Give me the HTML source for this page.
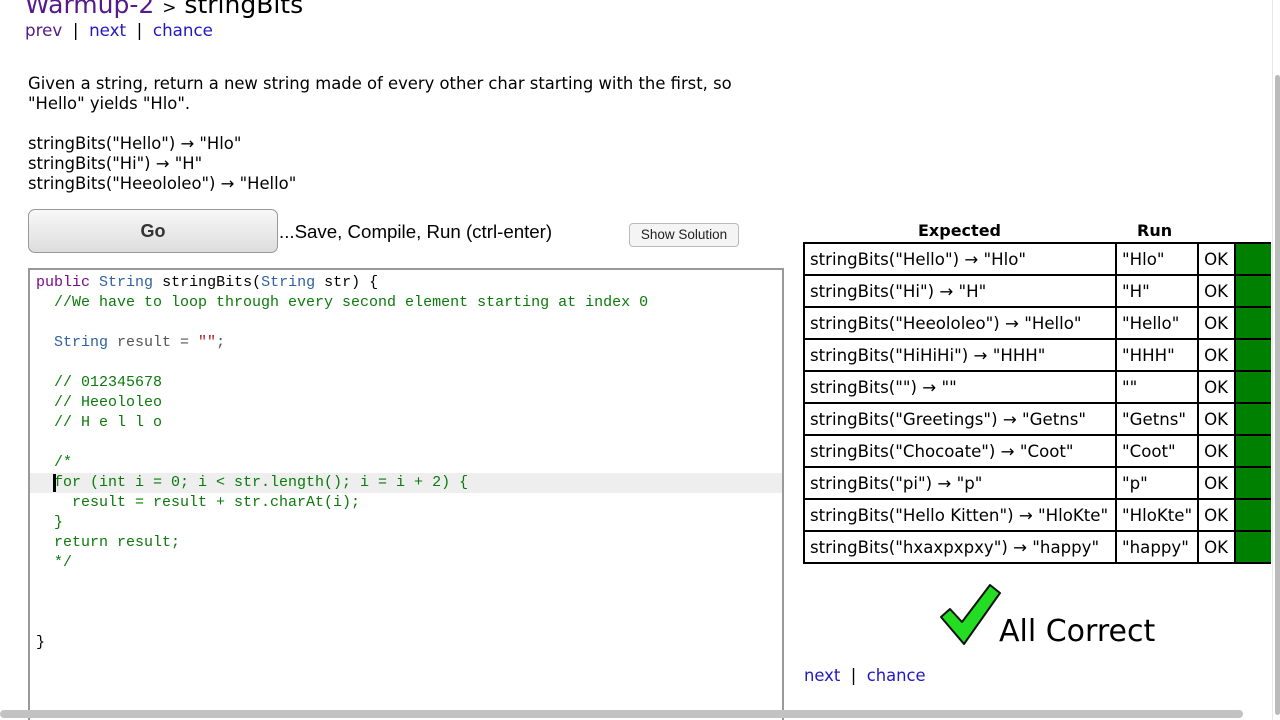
<!DOCTYPE html>
<html><head><meta charset="utf-8"><style>
body{margin:0;width:1280px;height:720px;overflow:hidden;background:#fff;font-family:"DejaVu Sans","Liberation Sans",sans-serif;color:#000;position:relative}
.a{position:absolute;white-space:pre}
.p{color:#551a8b}.b{color:#2218c0}
.code{position:absolute;left:28px;top:268px;width:752px;height:450px;border:2px solid #999;border-bottom:none;font-family:"Liberation Mono",monospace;font-size:15px;}
.code div{position:absolute;left:6px;height:20px;line-height:20px;white-space:pre;color:#0a7a0a}
table{position:absolute;left:803px;top:242px;border-collapse:collapse;font-size:16.6px}
td{border:2px solid #000;height:30px;padding:0 5px;white-space:nowrap}
</style></head><body>
<div class="a" style="left:25px;top:-10px;font-size:25px"><span class="p">Warmup-2</span> <span style="font-size:17px">&gt;</span> stringBits</div>
<div class="a" style="left:25px;top:20px;font-size:16.7px"><span class="p">prev</span>  |  <span class="b">next</span>  |  <span class="b">chance</span></div>
<div class="a" style="left:28px;top:74px;font-size:16.4px;line-height:20px">Given a string, return a new string made of every other char starting with the first, so
"Hello" yields "Hlo".

stringBits("Hello") → "Hlo"
stringBits("Hi") → "H"
stringBits("Heeololeo") → "Hello"</div>
<div style="position:absolute;left:28px;top:209px;width:248px;height:42px;border:1px solid #999;border-radius:7px;background:linear-gradient(#f8f8f8,#ddd);text-align:center;line-height:43px;font-family:'Liberation Sans',sans-serif;font-size:18px;font-weight:bold;color:#333">Go</div>
<div class="a" style="left:279px;top:221px;font-size:18.7px;font-family:'Liberation Sans',sans-serif">...Save, Compile, Run (ctrl-enter)</div>
<div style="position:absolute;left:629px;top:223px;width:108px;height:22px;border:1px solid #bbb;border-radius:4px;background:#f4f4f4;font-family:'Liberation Sans',sans-serif;font-size:13.5px;text-align:center;line-height:22px;color:#222">Show Solution</div>
<div class="code">
<div style="top:3px"><span style="color:#7a0a8a">public</span> <span style="color:#3060a0">String</span> <span style="color:#000">stringBits(</span><span style="color:#3060a0">String</span> <span style="color:#000">str) {</span></div>
<div style="top:23px">  //We have to loop through every second element starting at index 0</div>
<div style="top:63px;color:#555">  <span style="color:#3060a0">String</span> result = <span style="color:#a22">""</span>;</div>
<div style="top:103px">  // 012345678</div>
<div style="top:123px">  // Heeololeo</div>
<div style="top:143px">  // H e l l o</div>
<div style="top:183px">  /*</div>
<div style="top:203px;left:0;padding-left:6px;width:746px;background:#eee">  for (int i = 0; i &lt; str.length(); i = i + 2) {</div>
<div style="top:204px;left:23px;width:3px;background:#000;height:18px"></div>
<div style="top:223px">    result = result + str.charAt(i);</div>
<div style="top:243px">  }</div>
<div style="top:263px">  return result;</div>
<div style="top:283px">  */</div>
<div style="top:363px;color:#000">}</div>
</div>
<div class="a" style="left:918px;top:221px;font-size:16px;font-weight:bold">Expected</div>
<div class="a" style="left:1137px;top:221px;font-size:16px;font-weight:bold">Run</div>
<table>
<tr><td style="width:300px">stringBits("Hello") → "Hlo"</td><td style="width:69px">"Hlo"</td><td style="width:25px">OK</td><td style="background:#008000;width:25px;border-right:none"></td></tr>
<tr><td>stringBits("Hi") → "H"</td><td>"H"</td><td>OK</td><td style="background:#008000;border-right:none"></td></tr>
<tr><td>stringBits("Heeololeo") → "Hello"</td><td>"Hello"</td><td>OK</td><td style="background:#008000;border-right:none"></td></tr>
<tr><td>stringBits("HiHiHi") → "HHH"</td><td>"HHH"</td><td>OK</td><td style="background:#008000;border-right:none"></td></tr>
<tr><td>stringBits("") → ""</td><td>""</td><td>OK</td><td style="background:#008000;border-right:none"></td></tr>
<tr><td>stringBits("Greetings") → "Getns"</td><td>"Getns"</td><td>OK</td><td style="background:#008000;border-right:none"></td></tr>
<tr><td>stringBits("Chocoate") → "Coot"</td><td>"Coot"</td><td>OK</td><td style="background:#008000;border-right:none"></td></tr>
<tr><td>stringBits("pi") → "p"</td><td>"p"</td><td>OK</td><td style="background:#008000;border-right:none"></td></tr>
<tr><td>stringBits("Hello Kitten") → "HloKte"</td><td>"HloKte"</td><td>OK</td><td style="background:#008000;border-right:none"></td></tr>
<tr><td>stringBits("hxaxpxpxy") → "happy"</td><td>"happy"</td><td>OK</td><td style="background:#008000;border-right:none"></td></tr>
</table>
<svg style="position:absolute;left:938px;top:582px" width="64" height="66" viewBox="0 0 64 66"><path d="M3 35 L12 27 L24 40 L52 3 L62 11 L26 62 Z" fill="#22dd22" stroke="#111" stroke-width="2" stroke-linejoin="round"/></svg>
<div class="a" style="left:999px;top:614px;font-size:30px">All Correct</div>
<div class="a" style="left:804px;top:666px;font-size:16.4px"><span class="b">next</span>  |  <span class="b">chance</span></div>
<div style="position:absolute;left:1272px;top:0;width:1px;height:720px;background:#e8e8e8"></div>
<div style="position:absolute;left:1275px;top:75px;width:5px;height:640px;background:#bbb;border-radius:3px"></div>
<div style="position:absolute;left:0;top:710px;width:1243px;height:8px;background:#c2c2c2;border-radius:4px"></div>
</body></html>
